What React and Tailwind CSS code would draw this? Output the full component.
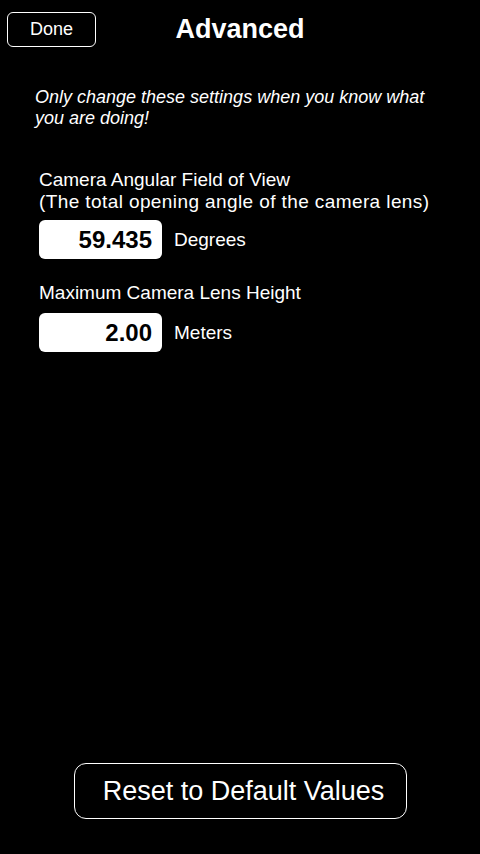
import React, { useState } from 'react';

function NumberField({ value, unit }) {
  return (
    <div className="flex items-center">
      <div className="w-[123px] h-[39px] bg-white rounded-[6px] flex items-center justify-end pr-[10px]">
        <span className="text-black font-bold text-[24px]">{value}</span>
      </div>
      <span className="ml-[12px] text-[19px] pt-[2px]">{unit}</span>
    </div>
  );
}

export default function App() {
  const [fov] = useState('59.435');
  const [height] = useState('2.00');

  return (
    <div
      className="min-h-screen bg-black text-white flex flex-col"
      style={{ fontFamily: '"Liberation Sans", Arial, sans-serif' }}
    >
      {/* header */}
      <div className="relative h-[58px] flex items-center justify-center">
        <button className="absolute left-[7px] top-[12px] w-[89px] h-[35px] border border-white rounded-[6px] text-[18px] text-white">
          Done
        </button>
        <h1 className="text-[27px] font-bold">Advanced</h1>
      </div>

      <p className="italic text-[18px] leading-[21px] px-[35px] pr-[30px] mt-[29px]">
        Only change these settings when you know what you are doing!
      </p>

      <div className="px-[39px] mt-[40px]">
        <div className="text-[19px] leading-[22px]">Camera Angular Field of View</div>
        <div className="text-[19px] leading-[22px] tracking-[0.4px]">(The total opening angle of the camera lens)</div>
        <div className="mt-[7px]">
          <NumberField value={fov} unit="Degrees" />
        </div>

        <div className="text-[19px] leading-[22px] mt-[23px]">Maximum Camera Lens Height</div>
        <div className="mt-[9px]">
          <NumberField value={height} unit="Meters" />
        </div>
      </div>

      <div className="mt-auto mb-[35px] flex justify-center">
        <button className="w-[333px] h-[56px] border border-white rounded-[12px] text-[27px] text-white pl-[7px]">
          Reset to Default Values
        </button>
      </div>
    </div>
  );
}
